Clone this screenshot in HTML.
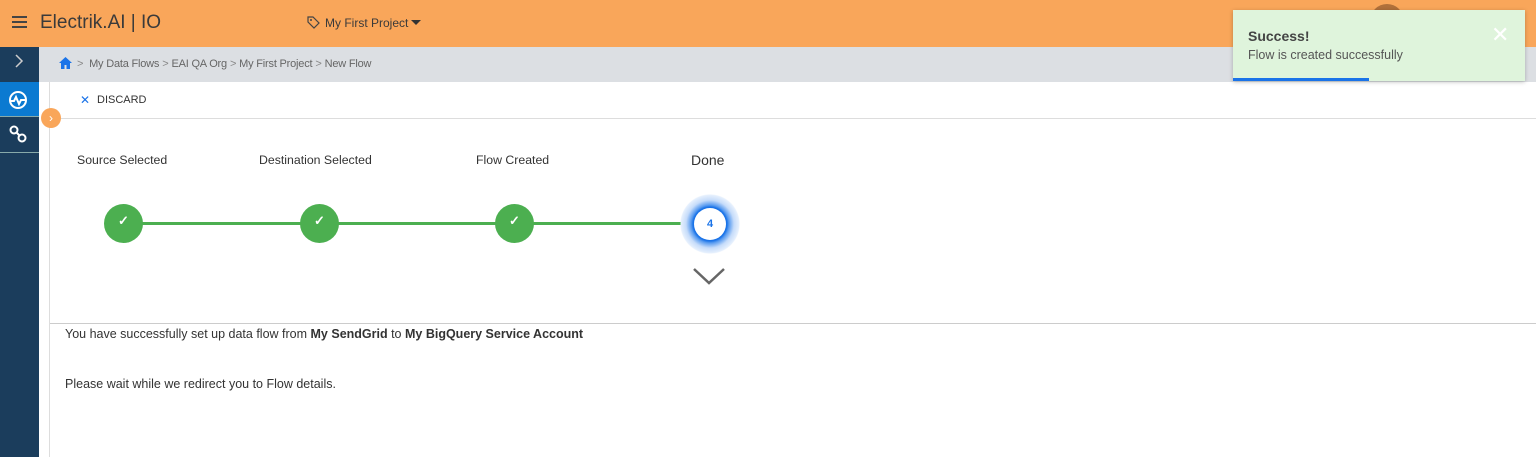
<!DOCTYPE html>
<html><head><style>
*{margin:0;padding:0;box-sizing:border-box}
body{width:1536px;height:457px;overflow:hidden;background:#fff;font-family:"Liberation Sans",Arial,sans-serif;position:relative;color:#333}
.hdr{position:absolute;left:0;top:0;width:1536px;height:47px;background:#f9a65a}
.side{position:absolute;left:0;top:47px;width:39px;height:410px;background:#1b3d5c}
.bc{position:absolute;left:39px;top:47px;width:1497px;height:35px;background:#dcdfe3;font-size:11px;color:#666}
.abs{position:absolute}
.circ{position:absolute;width:39px;height:39px;border-radius:50%;background:#4caf50;top:204px}
.sep{color:#888;margin:0 3px}
</style></head><body>
<div class="hdr">
<div class="abs" style="left:12px;top:16px;width:15px;height:2px;background:#444;box-shadow:0 5px 0 #444,0 10px 0 #444"></div>
<div class="abs" style="left:40px;top:12px;font-size:19px;color:#3a3a3a">Electrik.AI | IO</div>
<svg class="abs" style="left:307px;top:16px" width="13" height="13" viewBox="0 0 13 13"><path d="M1 1h5l6 6-5 5-6-6z" fill="none" stroke="#444" stroke-width="1.2"/><circle cx="4" cy="4" r="1" fill="#444"/></svg>
<div class="abs" style="left:325px;top:16px;font-size:12px;color:#3a3a3a">My First Project</div>
<div class="abs" style="left:411px;top:20px;border-left:5px solid transparent;border-right:5px solid transparent;border-top:5px solid #333"></div>
<div class="abs" style="left:1370px;top:4px;width:34px;height:34px;border-radius:50%;background:#b0703a"></div>
</div>
<div class="side">
<svg class="abs" style="left:14px;top:7px" width="10" height="14"><path d="M2 1l6 6-6 6" fill="none" stroke="#ccc" stroke-width="1.5"/></svg>
<div class="abs" style="left:0;top:35px;width:39px;height:34px;background:#0b7ad1"></div>
<svg class="abs" style="left:8px;top:43px" width="20" height="20" viewBox="0 0 20 20"><circle cx="10" cy="10" r="8" fill="none" stroke="#fff" stroke-width="2"/><path d="M2 11h4l2-4 3 7 2-4h5" fill="none" stroke="#fff" stroke-width="2"/></svg>
<div class="abs" style="left:0;top:69px;width:39px;height:1px;background:#8aa"></div>
<svg class="abs" style="left:9px;top:78px" width="18" height="18" viewBox="0 0 18 18"><circle cx="5" cy="5" r="3.5" fill="none" stroke="#fff" stroke-width="2"/><circle cx="13" cy="13" r="3.5" fill="none" stroke="#fff" stroke-width="2"/><path d="M7 7l4 4" stroke="#fff" stroke-width="2"/></svg>
<div class="abs" style="left:0;top:105px;width:39px;height:1px;background:#8aa"></div>
</div>
<div class="bc">
<svg class="abs" style="left:20px;top:10px" width="13" height="12" viewBox="0 0 13 12"><path d="M6.5 0L0 6h2v6h3.5V8h2v4H11V6h2z" fill="#1a73e8"/></svg>
<div class="abs" style="left:38px;top:11px;letter-spacing:-0.2px"><span class="sep" style="margin-left:0">&gt;</span> My Data Flows<span class="sep">&gt;</span>EAI QA Org<span class="sep">&gt;</span>My First Project<span class="sep">&gt;</span>New Flow</div>
</div>
<div class="abs" style="left:49px;top:82px;width:1px;height:375px;background:#ddd"></div>
<div class="abs" style="left:80px;top:93px;font-size:12px;color:#1a73e8">✕</div>
<div class="abs" style="left:97px;top:94px;font-size:11px;color:#333">DISCARD</div>
<div class="abs" style="left:50px;top:118px;width:1486px;height:1px;background:#ddd"></div>
<div class="abs" style="left:41px;top:108px;width:20px;height:20px;border-radius:50%;background:#f9a65a;color:#fff;font-size:12px;text-align:center;line-height:20px">›</div>
<div class="abs" style="left:77px;top:153px;font-size:12.3px">Source Selected</div>
<div class="abs" style="left:259px;top:153px;font-size:12.3px">Destination Selected</div>
<div class="abs" style="left:476px;top:153px;font-size:12.3px">Flow Created</div>
<div class="abs" style="left:691px;top:152px;font-size:14px">Done</div>
<div class="abs" style="left:123px;top:222px;width:587px;height:3px;background:#4caf50"></div>
<div class="circ" style="left:104px"></div><div class="circ" style="left:300px"></div><div class="circ" style="left:495px"></div>
<div class="abs" style="left:104px;top:213px;width:39px;text-align:center;color:#fff;font-size:13px;font-weight:bold">✓</div>
<div class="abs" style="left:300px;top:213px;width:39px;text-align:center;color:#fff;font-size:13px;font-weight:bold">✓</div>
<div class="abs" style="left:495px;top:213px;width:39px;text-align:center;color:#fff;font-size:13px;font-weight:bold">✓</div>
<div class="abs" style="left:680px;top:194px;width:60px;height:60px;border-radius:50%;background:radial-gradient(circle,#1a73e8 0 17px,#5a9cf0 19px,#c6dcfa 24px,#e6f0fd 29px,transparent 30px)"></div>
<div class="abs" style="left:694px;top:208px;width:32px;height:32px;border-radius:50%;background:#fff;color:#1a73e8;font-size:11px;font-weight:bold;text-align:center;line-height:32px">4</div>
<svg class="abs" style="left:692px;top:266px" width="34" height="20"><path d="M2 3l15 14 15-14" fill="none" stroke="#666" stroke-width="2.5"/></svg>
<div class="abs" style="left:50px;top:323px;width:1486px;height:1px;background:#ccc"></div>
<div class="abs" style="left:65px;top:327px;font-size:12.5px">You have successfully set up data flow from <b>My SendGrid</b> to <b>My BigQuery Service Account</b></div>
<div class="abs" style="left:65px;top:377px;font-size:12.5px">Please wait while we redirect you to Flow details.</div>
<div class="abs" style="left:1233px;top:10px;width:292px;height:71px;background:#dff4dc;box-shadow:0 1px 4px rgba(0,0,0,.25)">
<div class="abs" style="left:15px;top:18px;font-size:14px;font-weight:bold;color:#444">Success!</div>
<div class="abs" style="left:15px;top:38px;font-size:12.5px;color:#555">Flow is created successfully</div>
<div class="abs" style="left:258px;top:12px;font-size:22px;color:#fff">✕</div>
<div class="abs" style="left:0;top:68px;width:136px;height:3px;background:#1a73e8"></div>
</div>
</body></html>
